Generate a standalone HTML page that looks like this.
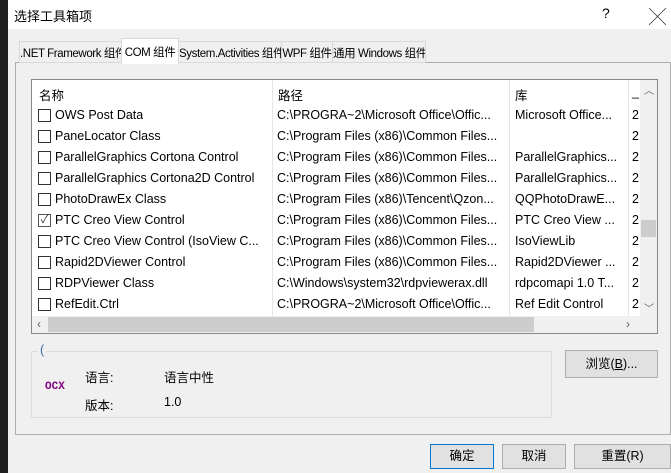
<!DOCTYPE html>
<html><head><meta charset="utf-8"><style>
*{margin:0;padding:0;box-sizing:border-box}
body{width:671px;height:473px;overflow:hidden;background:#f0f0f0;font-family:"Liberation Sans","Noto Sans CJK SC",sans-serif;font-size:12.5px;color:#000;position:relative}
.a{position:absolute}
.dark{left:0;top:0;width:8px;height:473px;background:#1e1e1e}
.title{left:8px;top:0;width:663px;height:29px;background:#fff}
.tab{position:absolute;top:41px;height:22px;border:1px solid #d9d9d9;background:#f0f0f0;padding-top:3px;text-align:center;white-space:nowrap;font-size:11.5px;letter-spacing:-0.4px;overflow:hidden}
.row{position:absolute;left:0;height:21px;width:610px;white-space:nowrap}
.row span{position:absolute;top:4px;overflow:hidden}
.cb{position:absolute;left:6px;top:5px;width:13px;height:13px;border:1px solid #333;background:#fff}
.btn{position:absolute;height:25px;border:1px solid #adadad;background:#e1e1e1;text-align:center;line-height:23px}
</style></head><body>
<div class="a dark"></div>
<div class="a title"><span class="a" style="left:6px;top:6px;font-size:13px">选择工具箱项</span><span class="a" style="left:594px;top:5px;font-size:14px">?</span><span class="a" style="left:641px;top:3px;font-size:17px;font-weight:100;color:#222">╳</span></div>
<div class="a" style="left:15px;top:62px;width:656px;height:373px;border:1px solid #adadad;background:#f0f0f0"></div>
<div class="tab" style="left:19px;width:103px">.NET Framework 组件</div>
<div class="tab" style="left:178px;width:104px">System.Activities 组件</div>
<div class="tab" style="left:281px;width:52px">WPF 组件</div>
<div class="tab" style="left:332px;width:94px">通用 Windows 组件</div>
<div class="tab" style="left:121px;width:58px;top:38px;height:26px;background:#fff;border-bottom:none;padding-top:5px">COM 组件</div>
<div class="a" style="left:31px;top:79px;width:627px;height:255px;border:1px solid #828790;background:#fff;overflow:hidden">
 <div class="a" style="left:0;top:0;width:608px;height:24px">
  <span class="a" style="left:7px;top:5px">名称</span>
  <span class="a" style="left:246px;top:5px">路径</span>
  <span class="a" style="left:483px;top:5px">库</span>
  <span class="a" style="left:600px;top:5px">_</span>
  <div class="a" style="left:240px;top:0;width:1px;height:237px;background:#e5e5e5"></div>
  <div class="a" style="left:477px;top:0;width:1px;height:237px;background:#e5e5e5"></div>
  <div class="a" style="left:596px;top:0;width:1px;height:237px;background:#e5e5e5"></div>
 </div>
 <div class="a" style="left:0;top:24px;width:608px;height:215px">
  <div class="row" style="top:0"><i class="cb"></i><span style="left:23px">OWS Post Data</span><span style="left:245px">C:\PROGRA~2\Microsoft Office\Offic...</span><span style="left:483px">Microsoft Office...</span><span style="left:600px">2</span></div>
  <div class="row" style="top:21px"><i class="cb"></i><span style="left:23px">PaneLocator Class</span><span style="left:245px">C:\Program Files (x86)\Common Files...</span><span style="left:600px">2</span></div>
  <div class="row" style="top:42px"><i class="cb"></i><span style="left:23px">ParallelGraphics Cortona Control</span><span style="left:245px">C:\Program Files (x86)\Common Files...</span><span style="left:483px">ParallelGraphics...</span><span style="left:600px">2</span></div>
  <div class="row" style="top:63px"><i class="cb"></i><span style="left:23px">ParallelGraphics Cortona2D Control</span><span style="left:245px">C:\Program Files (x86)\Common Files...</span><span style="left:483px">ParallelGraphics...</span><span style="left:600px">2</span></div>
  <div class="row" style="top:84px"><i class="cb"></i><span style="left:23px">PhotoDrawEx Class</span><span style="left:245px">C:\Program Files (x86)\Tencent\Qzon...</span><span style="left:483px">QQPhotoDrawE...</span><span style="left:600px">2</span></div>
  <div class="row" style="top:105px"><i class="cb" style="border-color:#555;font-size:11px;line-height:11px;text-align:center;font-style:normal;color:#333">✓</i><span style="left:23px">PTC Creo View Control</span><span style="left:245px">C:\Program Files (x86)\Common Files...</span><span style="left:483px">PTC Creo View ...</span><span style="left:600px">2</span></div>
  <div class="row" style="top:126px"><i class="cb"></i><span style="left:23px">PTC Creo View Control (IsoView C...</span><span style="left:245px">C:\Program Files (x86)\Common Files...</span><span style="left:483px">IsoViewLib</span><span style="left:600px">2</span></div>
  <div class="row" style="top:147px"><i class="cb"></i><span style="left:23px">Rapid2DViewer Control</span><span style="left:245px">C:\Program Files (x86)\Common Files...</span><span style="left:483px">Rapid2DViewer ...</span><span style="left:600px">2</span></div>
  <div class="row" style="top:168px"><i class="cb"></i><span style="left:23px">RDPViewer Class</span><span style="left:245px">C:\Windows\system32\rdpviewerax.dll</span><span style="left:483px">rdpcomapi 1.0 T...</span><span style="left:600px">2</span></div>
  <div class="row" style="top:189px"><i class="cb"></i><span style="left:23px">RefEdit.Ctrl</span><span style="left:245px">C:\PROGRA~2\Microsoft Office\Offic...</span><span style="left:483px">Ref Edit Control</span><span style="left:600px">2</span></div>
 </div>
 <div class="a" style="left:608px;top:0;width:17px;height:236px;background:#f0f0f0">
  <span class="a" style="left:4px;top:2px;font-size:10px;color:#606060">︿</span>
  <div class="a" style="left:1px;top:140px;width:15px;height:17px;background:#cdcdcd"></div>
  <span class="a" style="left:4px;top:220px;font-size:10px;color:#606060">﹀</span>
 </div>
 <div class="a" style="left:0;top:236px;width:625px;height:17px;background:#f0f0f0">
  <span class="a" style="left:5px;top:1px;font-size:12px;color:#606060">‹</span>
  <div class="a" style="left:16px;top:1px;width:486px;height:15px;background:#cdcdcd"></div>
  <span class="a" style="left:594px;top:1px;font-size:12px;color:#606060">›</span>
 </div>
</div>
<div class="a" style="left:31px;top:351px;width:521px;height:67px;border:1px solid #dcdcdc"></div>
<span class="a" style="left:38px;top:343px;background:#f0f0f0;color:#3a6ea5;padding:0 2px">(</span>
<span class="a" style="left:45px;top:381px;color:#800080;font-family:'Liberation Mono',monospace;font-weight:bold;font-size:11px">OCX</span>
<span class="a" style="left:85px;top:367px">语言:</span><span class="a" style="left:164px;top:367px">语言中性</span>
<span class="a" style="left:85px;top:395px">版本:</span><span class="a" style="left:164px;top:395px">1.0</span>
<div class="btn" style="left:565px;top:350px;width:93px;height:28px;line-height:26px">浏览(<u>B</u>)...</div>
<div class="btn" style="left:430px;top:444px;width:64px;border-color:#0078d7">确定</div>
<div class="btn" style="left:502px;top:444px;width:64px">取消</div>
<div class="btn" style="left:574px;top:444px;width:97px">重置(R)</div>
</body></html>
